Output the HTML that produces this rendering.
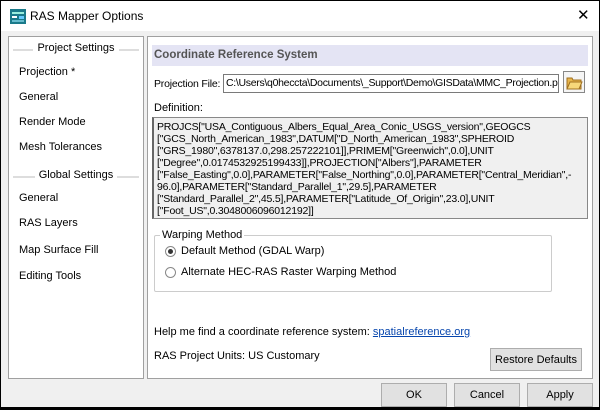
<!DOCTYPE html>
<html><head><style>
*{margin:0;padding:0;box-sizing:border-box}
body{width:600px;height:410px;background:#000;font-family:"Liberation Sans",Arial,sans-serif;font-size:11px;color:#000;position:relative;overflow:hidden}
.win{position:absolute;left:1px;top:1px;width:598px;height:406px;background:#f0f0f0}
.title{position:absolute;left:0;top:0;width:598px;height:30px;background:#fff}
.abs{position:absolute}
.panel{position:absolute;background:#fff;border:1px solid #a0a0a0}
.btn{position:absolute;background:#e1e1e1;border:1px solid #adadad;text-align:center;font-size:11px}
.sec{position:absolute;left:2px;width:130px;text-align:center;font-size:11px}
.sec:before{content:"";position:absolute;left:2px;right:2px;top:7px;border-top:2px solid #ddd;z-index:0}
.sec span{background:#fff;position:relative;padding:0 4px}
.item{position:absolute;left:10px;font-size:11px}
</style></head><body>
<div class="win">
<div class="title">
 <svg class="abs" style="left:9px;top:8px" width="16" height="15"><rect width="16" height="15" fill="#1a7a8a"/><rect x="2" y="3" width="12" height="2" fill="#9ed"/><rect x="2" y="7" width="5" height="2" fill="#fff"/><rect x="9" y="7" width="5" height="3" fill="#6cf"/><rect x="2" y="11" width="12" height="2" fill="#6bc"/></svg>
 <div class="abs" style="left:29px;top:8px;font-size:12px">RAS Mapper Options</div>
 <div class="abs" style="left:576px;top:5px;font-size:15px">✕</div>
</div>
<div class="panel" style="left:7px;top:35px;width:136px;height:343px">
 <div class="sec" style="top:5px"><span>Project Settings</span></div>
 <div class="item" style="top:29px">Projection *</div>
 <div class="item" style="top:54px">General</div>
 <div class="item" style="top:79px">Render Mode</div>
 <div class="item" style="top:104px">Mesh Tolerances</div>
 <div class="sec" style="top:132px"><span>Global Settings</span></div>
 <div class="item" style="top:155px">General</div>
 <div class="item" style="top:180px">RAS Layers</div>
 <div class="item" style="top:207px">Map Surface Fill</div>
 <div class="item" style="top:233px">Editing Tools</div>
</div>
<div class="panel" style="left:146px;top:35px;width:446px;height:343px">
 <div class="abs" style="left:4px;top:8px;width:436px;height:21px;background:#e4e4f4;color:#555;font-weight:bold;font-size:11.5px;padding:4px 2px">Coordinate Reference System</div>
 <div class="abs" style="left:6px;top:41px;font-size:10.5px;letter-spacing:-0.2px">Projection File:</div>
 <div class="abs" style="left:75px;top:37px;width:336px;height:19px;border:1px solid #7a7a7a;padding:2px 2px;white-space:nowrap;overflow:hidden;font-size:10.5px;letter-spacing:-0.3px">C:\Users\q0heccta\Documents\_Support\Demo\GISData\MMC_Projection.prj</div>
 <div class="abs" style="left:415px;top:34px;width:22px;height:22px;border:1px solid #888;background:#f5f5f5"><svg width="20" height="20"><path d="M3 6h5l1 2h8v9H3z" fill="#e8b54a" stroke="#a07020"/><path d="M3 17l3-7h12l-3 7z" fill="#f7d77a" stroke="#a07020"/></svg></div>
 <div class="abs" style="left:6px;top:65px">Definition:</div>
 <div class="abs" style="left:4px;top:80px;width:436px;height:102px;background:#f0f0f0;border:1px solid #888;border-left:2px solid #666;padding:3px 3px;white-space:pre;font-size:10.5px;line-height:12px;letter-spacing:-0.2px;overflow:hidden">PROJCS["USA_Contiguous_Albers_Equal_Area_Conic_USGS_version",GEOGCS
["GCS_North_American_1983",DATUM["D_North_American_1983",SPHEROID
["GRS_1980",6378137.0,298.257222101]],PRIMEM["Greenwich",0.0],UNIT
["Degree",0.0174532925199433]],PROJECTION["Albers"],PARAMETER
["False_Easting",0.0],PARAMETER["False_Northing",0.0],PARAMETER["Central_Meridian",-
96.0],PARAMETER["Standard_Parallel_1",29.5],PARAMETER
["Standard_Parallel_2",45.5],PARAMETER["Latitude_Of_Origin",23.0],UNIT
["Foot_US",0.3048006096012192]]</div>
 <div class="abs" style="left:6px;top:198px;width:398px;height:57px;border:1px solid #ccc;border-radius:2px"></div>
 <div class="abs" style="left:12px;top:192px;background:#fff;padding:0 2px">Warping Method</div>
 <div class="abs" style="left:17px;top:209px;width:11px;height:11px;border:1px solid #888;border-radius:50%;background:#fff"><div style="margin:2px;width:5px;height:5px;border-radius:50%;background:#333"></div></div>
 <div class="abs" style="left:33px;top:208px">Default Method (GDAL Warp)</div>
 <div class="abs" style="left:17px;top:230px;width:11px;height:11px;border:1px solid #888;border-radius:50%;background:#fff"></div>
 <div class="abs" style="left:33px;top:229px">Alternate HEC-RAS Raster Warping Method</div>
 <div class="abs" style="left:6px;top:289px">Help me find a coordinate reference system: <span style="color:#0645ad;text-decoration:underline">spatialreference.org</span></div>
 <div class="abs" style="left:6px;top:313px">RAS Project Units: US Customary</div>
 <div class="btn" style="left:342px;top:311px;width:92px;height:23px;padding-top:5px">Restore Defaults</div>
</div>
<div class="btn" style="left:380px;top:382px;width:66px;height:24px;padding-top:5px">OK</div>
<div class="btn" style="left:453px;top:382px;width:66px;height:24px;padding-top:5px">Cancel</div>
<div class="btn" style="left:526px;top:382px;width:66px;height:24px;padding-top:5px">Apply</div>
</div>
</body></html>
